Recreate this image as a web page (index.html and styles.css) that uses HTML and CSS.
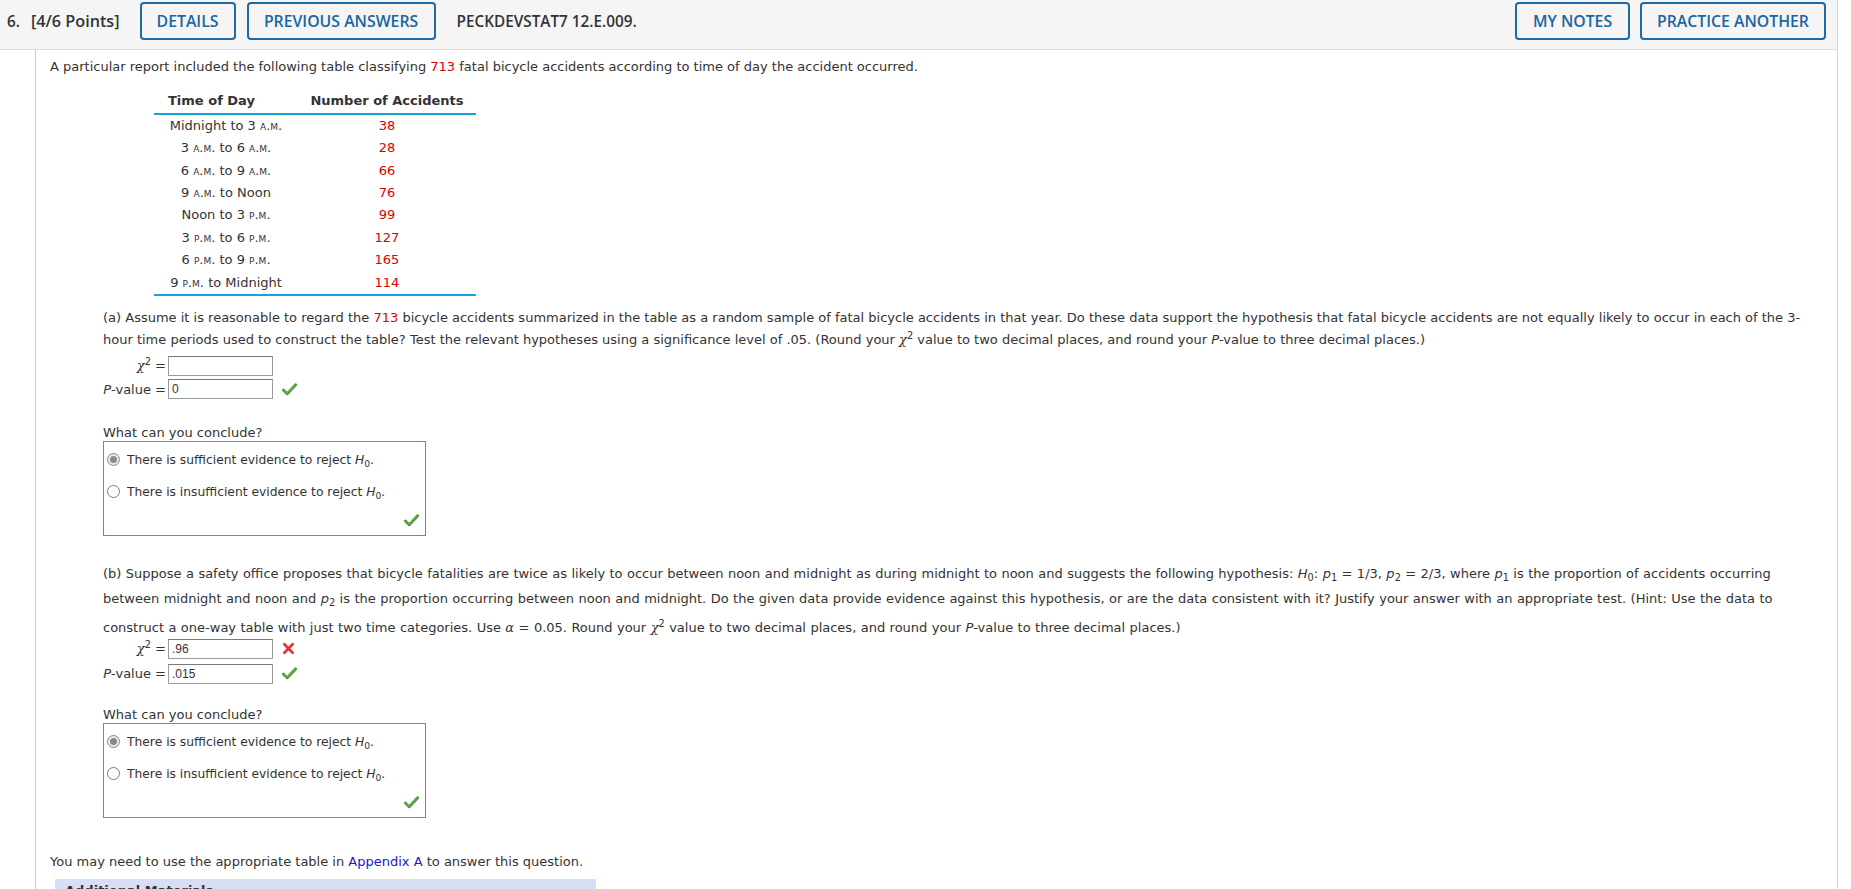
FILE: index.html
```html
<!DOCTYPE html>
<html>
<head>
<meta charset="utf-8">
<title>Question 6</title>
<link rel="stylesheet" href="styles.css">
</head>
<body>
<div class="question">
  <div class="qhead">
    <span class="qnum">6.</span>
    <span class="pts">[4/6 Points]</span>
    <button class="btn btn-details">DETAILS</button>
    <button class="btn btn-prev">PREVIOUS ANSWERS</button>
    <span class="code">PECKDEVSTAT7 12.E.009.</span>
    <span class="spacer"></span>
    <button class="btn btn-notes">MY NOTES</button>
    <button class="btn btn-practice">PRACTICE ANOTHER</button>
  </div>
  <div class="qbody">
    <p class="intro">A particular report included the following table classifying <span class="red">713</span> fatal bicycle accidents according to time of day the accident occurred.</p>
    <table class="data">
      <thead>
        <tr><th class="c1">Time of Day</th><th class="c2">Number of Accidents</th></tr>
      </thead>
      <tbody>
        <tr><td class="c1">Midnight to 3 <span class="sc">a.m.</span></td><td class="c2 red">38</td></tr>
        <tr><td class="c1">3 <span class="sc">a.m.</span> to 6 <span class="sc">a.m.</span></td><td class="c2 red">28</td></tr>
        <tr><td class="c1">6 <span class="sc">a.m.</span> to 9 <span class="sc">a.m.</span></td><td class="c2 red">66</td></tr>
        <tr><td class="c1">9 <span class="sc">a.m.</span> to Noon</td><td class="c2 red">76</td></tr>
        <tr><td class="c1">Noon to 3 <span class="sc">p.m.</span></td><td class="c2 red">99</td></tr>
        <tr><td class="c1">3 <span class="sc">p.m.</span> to 6 <span class="sc">p.m.</span></td><td class="c2 red">127</td></tr>
        <tr><td class="c1">6 <span class="sc">p.m.</span> to 9 <span class="sc">p.m.</span></td><td class="c2 red">165</td></tr>
        <tr><td class="c1">9 <span class="sc">p.m.</span> to Midnight</td><td class="c2 red">114</td></tr>
      </tbody>
    </table>

    <div class="part part-a">
      <div class="ptext">
        <div class="line">(a) Assume it is reasonable to regard the <span class="red">713</span> bicycle accidents summarized in the table as a random sample of fatal bicycle accidents in that year. Do these data support the hypothesis that fatal bicycle accidents are not equally likely to occur in each of the 3-</div>
        <div class="line">hour time periods used to construct the table? Test the relevant hypotheses using a significance level of .05. (Round your <span class="chi">χ</span><sup>2</sup> value to two decimal places, and round your <i>P</i>-value to three decimal places.)</div>
      </div>
      <div class="answers">
        <div class="arow">
          <span class="alabel"><span class="chi">χ</span><sup>2</sup> =</span>
          <span class="ainput"></span>
          <span class="amark"></span>
        </div>
        <div class="arow">
          <span class="alabel"><i>P</i>-value =</span>
          <span class="ainput">0</span>
          <span class="amark"><svg class="check" viewBox="0 0 16 14" width="15" height="13"><path d="M1.5 7.5 L5.5 11.5 L14.5 2" fill="none" stroke="#4f9a3a" stroke-width="3.2" stroke-linecap="round" stroke-linejoin="round"/><path d="M2.2 7.4 L5.5 10.5 L13.6 2.3" fill="none" stroke="#7cc468" stroke-width="1" stroke-linecap="round" stroke-linejoin="round"/></svg></span>
        </div>
      </div>
      <div class="conclude">What can you conclude?</div>
      <div class="choices">
        <div class="choice"><span class="radio on"></span><span>There is sufficient evidence to reject <i>H</i><sub>0</sub>.</span></div>
        <div class="choice"><span class="radio"></span><span>There is insufficient evidence to reject <i>H</i><sub>0</sub>.</span></div>
        <div class="boxmark"><svg class="check" viewBox="0 0 16 14" width="15" height="13"><path d="M1.5 7.5 L5.5 11.5 L14.5 2" fill="none" stroke="#4f9a3a" stroke-width="3.2" stroke-linecap="round" stroke-linejoin="round"/><path d="M2.2 7.4 L5.5 10.5 L13.6 2.3" fill="none" stroke="#7cc468" stroke-width="1" stroke-linecap="round" stroke-linejoin="round"/></svg></div>
      </div>
    </div>

    <div class="part part-b">
      <div class="ptext">
        <div class="line bl1">(b) Suppose a safety office proposes that bicycle fatalities are twice as likely to occur between noon and midnight as during midnight to noon and suggests the following hypothesis: <i>H</i><sub>0</sub>: <i>p</i><sub>1</sub> = 1/3, <i>p</i><sub>2</sub> = 2/3, where <i>p</i><sub>1</sub> is the proportion of accidents occurring</div>
        <div class="line bl2">between midnight and noon and <i>p</i><sub>2</sub> is the proportion occurring between noon and midnight. Do the given data provide evidence against this hypothesis, or are the data consistent with it? Justify your answer with an appropriate test. (Hint: Use the data to</div>
        <div class="line bl3">construct a one-way table with just two time categories. Use <i class="greek">α</i> = 0.05. Round your <span class="chi">χ</span><sup>2</sup> value to two decimal places, and round your <i>P</i>-value to three decimal places.)</div>
      </div>
      <div class="answers">
        <div class="arow">
          <span class="alabel"><span class="chi">χ</span><sup>2</sup> =</span>
          <span class="ainput">.96</span>
          <span class="amark"><svg class="cross" viewBox="0 0 14 14" width="13" height="13"><path d="M2.5 2.5 L11.5 11.5 M11.5 2.5 L2.5 11.5" fill="none" stroke="#e2383a" stroke-width="3" stroke-linecap="round"/></svg></span>
        </div>
        <div class="arow">
          <span class="alabel"><i>P</i>-value =</span>
          <span class="ainput">.015</span>
          <span class="amark"><svg class="check" viewBox="0 0 16 14" width="15" height="13"><path d="M1.5 7.5 L5.5 11.5 L14.5 2" fill="none" stroke="#4f9a3a" stroke-width="3.2" stroke-linecap="round" stroke-linejoin="round"/><path d="M2.2 7.4 L5.5 10.5 L13.6 2.3" fill="none" stroke="#7cc468" stroke-width="1" stroke-linecap="round" stroke-linejoin="round"/></svg></span>
        </div>
      </div>
      <div class="conclude">What can you conclude?</div>
      <div class="choices">
        <div class="choice"><span class="radio on"></span><span>There is sufficient evidence to reject <i>H</i><sub>0</sub>.</span></div>
        <div class="choice"><span class="radio"></span><span>There is insufficient evidence to reject <i>H</i><sub>0</sub>.</span></div>
        <div class="boxmark"><svg class="check" viewBox="0 0 16 14" width="15" height="13"><path d="M1.5 7.5 L5.5 11.5 L14.5 2" fill="none" stroke="#4f9a3a" stroke-width="3.2" stroke-linecap="round" stroke-linejoin="round"/><path d="M2.2 7.4 L5.5 10.5 L13.6 2.3" fill="none" stroke="#7cc468" stroke-width="1" stroke-linecap="round" stroke-linejoin="round"/></svg></div>
      </div>
    </div>

    <p class="appendix">You may need to use the appropriate table in <a class="link" href="#">Appendix A</a> to answer this question.</p>
    <div class="materials">Additional Materials</div>
  </div>
</div>
</body>
</html>
```

FILE: styles.css
```css
html, body {
  margin: 0;
  padding: 0;
  background: #ffffff;
}
body {
  font-family: Verdana, "DejaVu Sans", "Bitstream Vera Sans", sans-serif;
  font-size: 13px;
  color: #333333;
  overflow: hidden;
}
.question {
  width: 1837px;
  border-right: 1px solid #d6d6d6;
  min-height: 889px;
}
.qhead {
  background: #f5f5f5;
  border-bottom: 1px solid #dcdcdc;
  display: flex;
  align-items: flex-start;
  padding: 2px 11px 0 7px;
  box-sizing: border-box;
  height: 50px;
  font-family: "Open Sans", sans-serif;
  font-size: 15.3px;
}
.qnum, .pts, .code {
  font-weight: 600;
  color: #333;
  line-height: 38px;
  white-space: nowrap;
}
.qnum { margin-right: 11px; }
.pts { margin-right: 20px; font-size: 16.2px; }
.code { margin-left: 10px; }
.btn {
  height: 38px;
  box-sizing: border-box;
  border: 2px solid #1f6aa5;
  border-radius: 4px;
  background: #f5f5f5;
  color: #1b65a0;
  font-family: "Open Sans", sans-serif;
  font-size: 15.8px;
  font-weight: 600;
  padding: 0;
  margin: 0;
  margin-right: 11px;
  white-space: nowrap;
}
.btn-details { width: 96px; }
.btn-prev { width: 189px; }
.btn-notes { width: 115px; margin-right: 10px; }
.btn-practice { width: 186px; margin-right: 0; }
.spacer { flex: 1; }

.qbody {
  margin-left: 35px;
  border-left: 1px solid #c9c9c9;
  padding: 6px 0 0 14px;
  min-height: 838px;
}
.red { color: #dd0000; }
.intro {
  margin: 0;
  line-height: 22.4px;
  white-space: nowrap;
}
.data {
  border-collapse: collapse;
  margin: 12px 0 0 104px;
  width: 322px;
  table-layout: fixed;
}
.data th, .data td {
  padding: 0;
  height: 22.4px;
  line-height: 22.4px;
  white-space: nowrap;
}
.data th {
  font-weight: bold;
  border-bottom: 2px solid #15a3dc;
  color: #333;
}
.data th.c1 { text-align: left; padding-left: 14px; width: 144px; box-sizing: border-box; }
.data th.c2 { text-align: center; width: 178px; }
.data td { text-align: center; }
.data tbody tr:last-child td { border-bottom: 2px solid #15a3dc; }
.sc { font-variant: small-caps; }

.part { margin-left: 53px; }
.part-a { margin-top: 11px; }
.part-b { margin-top: 26.5px; }
.ptext { white-space: nowrap; }
.line { line-height: 22.4px; height: 22.4px; }
.bl1 { word-spacing: 0.3px; }
.bl2 { margin-top: 2.4px; word-spacing: 0.3px; }
.bl3 { margin-top: 6.5px; word-spacing: 0.3px; }
sup, sub { font-size: 75%; line-height: 0; }
sup { vertical-align: 0.5em; }
sub { vertical-align: -0.3em; }
.chi, .greek { font-family: "DejaVu Serif", serif; font-style: italic; }

.part-a .answers { margin-top: 2.2px; }
.part-b .answers { margin-top: -2.7px; }
.arow {
  display: flex;
  align-items: center;
  height: 23.6px;
}
.part-b .arow { height: 25px; }
.alabel {
  width: 65px;
  text-align: right;
  padding-right: 2px;
  box-sizing: border-box;
  flex: none;
  white-space: nowrap;
}
.ainput {
  width: 105px;
  height: 20px;
  box-sizing: border-box;
  border: 1px solid #9a9a9a;
  border-top-color: #7a7a7a;
  background: #fff;
  font-family: "Liberation Sans", Arial, sans-serif;
  font-size: 12px;
  line-height: 18px;
  padding-left: 3px;
  color: #333;
  flex: none;
}
.amark {
  width: 30px;
  display: flex;
  align-items: center;
  padding-left: 9px;
  box-sizing: border-box;
  flex: none;
}
.conclude {
  margin-top: 24.2px;
  line-height: 16px;
  white-space: nowrap;
}
.part-b .conclude { margin-top: 21px; }
.choices {
  width: 323px;
  height: 95px;
  box-sizing: border-box;
  border: 1px solid #6a9f38;
  padding-top: 6px;
  position: relative;
}
.choice {
  display: flex;
  align-items: center;
  height: 23px;
  margin-bottom: 9px;
  padding-left: 3px;
  white-space: nowrap;
  font-size: 12.3px;
}
.radio {
  width: 13px;
  height: 13px;
  box-sizing: border-box;
  border-radius: 50%;
  border: 1px solid #7b7b7b;
  background: #fff;
  margin-right: 7px;
  display: inline-flex;
  align-items: center;
  justify-content: center;
  flex: none;
}
.radio.on { border-color: #8a8a8a; background: #e9e9e9; }
.radio.on::after {
  content: "";
  width: 7px;
  height: 7px;
  border-radius: 50%;
  background: #8a8a8a;
}
.boxmark {
  position: absolute;
  right: 6px;
  bottom: 5px;
}
.appendix {
  margin: 33px 0 0 0;
  line-height: 22.4px;
  white-space: nowrap;
}
.link { color: #2512d8; text-decoration: none; }
.materials {
  margin: 5px 0 0 5px;
  width: 541px;
  height: 40px;
  background: #d7dff5;
  padding: 4px 10px;
  box-sizing: border-box;
  font-weight: bold;
}
```
